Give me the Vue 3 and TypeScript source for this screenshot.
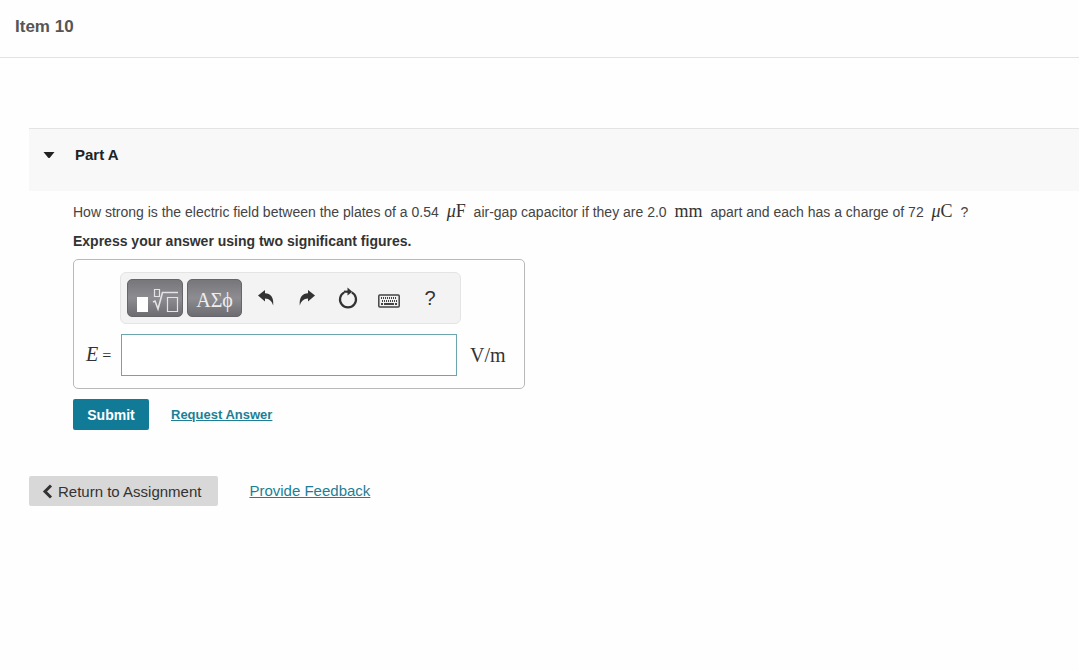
<script setup lang="ts">
import { ref } from 'vue'

const open = ref(true)
const answer = ref('')
const keyColumns = [3, 5, 7, 9, 11, 13, 15, 17]
</script>

<template>
  <main class="page">
    <header class="item-header">
      <h1>Item 10</h1>
    </header>

    <section class="part">
      <div class="part-header">
        <button class="part-toggle" type="button" :aria-expanded="open" @click="open = !open">
          <svg width="12" height="8" viewBox="0 0 12 8" aria-hidden="true">
            <path d="M0.5 1H11.5L7 6.4Q6 7.4 5 6.4Z" fill="#222" />
          </svg>
          <span>Part A</span>
        </button>
      </div>

      <form v-if="open" class="part-body" @submit.prevent>
        <p class="question">
          How strong is the electric field between the plates of a 0.54
          <span class="math"><i>μ</i>F</span> air-gap capacitor if they are 2.0
          <span class="math">mm</span> apart and each has a charge of 72
          <span class="math"><i>μ</i>C</span> ?
        </p>
        <p class="instruction">Express your answer using two significant figures.</p>

        <div class="answer-box">
          <div class="toolbar" role="toolbar" aria-label="Equation tools">
            <button class="palette" type="button" aria-label="Templates">
              <svg width="44" height="28" viewBox="0 0 44 28" aria-hidden="true">
                <path d="M4 13H15V28H4Z" fill="#fff" />
                <g fill="none" stroke="#e4e4e6">
                  <path d="M21.500 5.500H26.500V12.500H21.500Z" stroke-width="1.2" />
                  <path d="M20 18L22 17L25 25L29.500 8.500H45" stroke-width="1.6" />
                  <path d="M34.500 13.500H44.500V27.500H34.500Z" stroke-width="1.2" />
                </g>
              </svg>
            </button>
            <button class="palette greek" type="button" aria-label="Greek symbols">ΑΣϕ</button>
            <button class="tool" type="button" aria-label="Undo">
              <svg width="22" height="22" viewBox="0 0 22 22" aria-hidden="true">
                <path d="M3 8.500L10 3V6.200C15.500 6.300 19 10 18.200 18.500C16.800 14.200 14.500 11.800 10 11.600V14.500Z" fill="#333" />
              </svg>
            </button>
            <button class="tool" type="button" aria-label="Redo">
              <svg width="22" height="22" viewBox="0 0 22 22" aria-hidden="true">
                <path d="M19 8.500L12 3V6.200C6.500 6.300 3 10 3.800 18.500C5.200 14.200 7.500 11.800 12 11.600V14.500Z" fill="#333" />
              </svg>
            </button>
            <button class="tool" type="button" aria-label="Reset">
              <svg width="22" height="22" viewBox="0 0 22 22" aria-hidden="true">
                <path d="M14.800 5.400A8 8 0 1 1 7.200 5.400" fill="none" stroke="#333" stroke-width="2.200" />
                <path d="M7 4.700H11.500" stroke="#333" stroke-width="2.200" />
                <path d="M10.500 0.500L15.300 4.700L10.500 8.500Z" fill="#333" />
              </svg>
            </button>
            <button class="tool" type="button" aria-label="Keyboard shortcuts">
              <svg width="22" height="22" viewBox="0 0 22 22" aria-hidden="true">
                <rect x="0.800" y="8" width="20.400" height="12" rx="1" fill="#f1f1f1" stroke="#444" stroke-width="1.500" />
                <g fill="#444">
                  <rect v-for="x in keyColumns" :key="`top-${x}`" :x="x" y="10" width="1" height="2" />
                  <rect v-for="x in keyColumns" :key="`mid-${x}`" :x="x + 1" y="13" width="1" height="2" />
                  <rect x="3" y="16" width="2" height="2" />
                  <rect x="6" y="16" width="10" height="2" />
                  <rect x="17" y="16" width="2" height="2" />
                </g>
              </svg>
            </button>
            <button class="tool help" type="button" aria-label="Help">?</button>
          </div>

          <div class="answer-row">
            <label for="answer"><i>E</i> =</label>
            <input id="answer" v-model="answer" type="text" autocomplete="off" />
            <span class="unit">V/m</span>
          </div>
        </div>

        <div class="actions">
          <button class="submit" type="submit">Submit</button>
          <a class="request" href="#">Request Answer</a>
        </div>
      </form>
    </section>

    <footer class="footer">
      <button class="return" type="button">
        <svg width="11" height="15" viewBox="0 0 11 15" aria-hidden="true">
          <path d="M9 1.500L3 7.500L9 13.500" fill="none" stroke="#333" stroke-width="3" />
        </svg>
        <span>Return to Assignment</span>
      </button>
      <a class="feedback" href="#">Provide Feedback</a>
    </footer>
  </main>
</template>

<style>
body {
  margin: 0;
  background: #fefefe;
}
</style>

<style scoped>
.page {
  font-family: 'Liberation Sans', Arial, sans-serif;
  font-size: 14px;
  line-height: 20px;
  color: #444;
}

button {
  font-family: inherit;
  border: 0;
  padding: 0;
  cursor: pointer;
}

a {
  color: #1c7f96;
}

.item-header {
  padding: 16px 15px 20px;
  border-bottom: 1px solid #e2e2e2;
}

h1 {
  margin: 0;
  font-size: 17px;
  line-height: 21px;
  color: #555;
}

.part {
  margin: 70px 0 0 29px;
}

.part-header {
  padding: 16px 14px 26px;
  border-top: 1px solid #e4e4e4;
  background: #f8f8f8;
}

.part-toggle {
  display: flex;
  align-items: center;
  gap: 20px;
  background: none;
  color: #222;
  font-size: 15px;
  line-height: 20px;
  font-weight: bold;
}

.part-body {
  padding: 10px 16px 0 44px;
}

.question {
  margin: 0;
  line-height: 22px;
}

.math,
.answer-row label,
.unit {
  font-family: 'Liberation Serif', 'Times New Roman', serif;
  font-size: 18px;
  color: #333;
}

.math {
  line-height: 18px;
  margin: 0 4px;
}

.instruction {
  margin: 8px 0 8px;
  font-weight: bold;
  color: #333;
}

.answer-box {
  box-sizing: border-box;
  width: 452px;
  max-width: 100%;
  padding: 12px 16px 12px 12px;
  border: 1px solid #b8b8b8;
  border-radius: 5px;
}

.toolbar {
  display: flex;
  align-items: center;
  box-sizing: border-box;
  width: 341px;
  height: 52px;
  margin-left: 34px;
  padding: 0 6px;
  border: 1px solid #e4e4e4;
  border-radius: 6px;
  background: #f3f3f3;
}

.palette {
  display: flex;
  align-items: center;
  justify-content: center;
  width: 56px;
  height: 38px;
  margin-right: 4px;
  border: 1px solid #66666a;
  border-radius: 5px;
  background: linear-gradient(#77777b, #8d8d91 50%, #6d6d71);
  color: #eee;
}

.palette svg {
  overflow: visible;
}

.greek {
  width: 55px;
  padding-top: 4px;
  font-family: 'Liberation Serif', 'DejaVu Serif', serif;
  font-size: 20px;
  margin-right: 13px;
}

.tool {
  display: flex;
  align-items: center;
  justify-content: center;
  width: 22px;
  height: 28px;
  margin-right: 19px;
  background: none;
  color: #333;
}

.help {
  margin-right: 0;
  font-size: 20px;
}

.answer-row {
  display: flex;
  align-items: center;
  margin-top: 10px;
}

.answer-row label {
  width: 35px;
  font-size: 16px;
  white-space: nowrap;
}

.answer-row label i {
  font-size: 20px;
}

.answer-row input {
  box-sizing: border-box;
  flex: 1;
  min-width: 0;
  height: 42px;
  padding: 0 8px;
  border: 1px solid #6ba5ae;
  background: #fff;
  font-size: 18px;
}

.unit {
  width: 38px;
  margin-left: 13px;
  font-size: 20px;
}

.actions {
  display: flex;
  align-items: center;
  gap: 22px;
  margin-top: 10px;
}

.submit {
  width: 76px;
  height: 31px;
  border-radius: 2px;
  background: #117a97;
  color: #fff;
  font-size: 14px;
  font-weight: bold;
}

.request {
  font-size: 13px;
  font-weight: bold;
}

.footer {
  display: flex;
  align-items: center;
  gap: 31px;
  margin: 46px 0 0 29px;
}

.return {
  display: flex;
  align-items: center;
  gap: 5px;
  height: 30px;
  padding: 0 17px 0 13px;
  border-radius: 2px;
  background: #d8d8d8;
  color: #333;
  font-size: 15px;
}

.feedback {
  font-size: 15px;
}
</style>
